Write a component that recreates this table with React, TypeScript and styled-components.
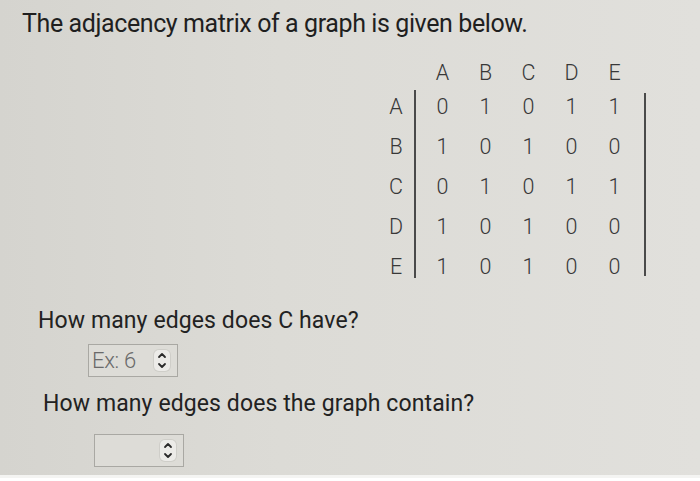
import React from "react";
import styled, { createGlobalStyle } from "styled-components";

const Global = createGlobalStyle`
  html, body { margin: 0; padding: 0; }
  body {
    width: 700px; height: 481px; overflow: hidden;
    font-family: Roboto, "Liberation Sans", sans-serif;
  }
`;

const Page = styled.div`
  width: 700px;
  height: 478px;
  box-sizing: border-box;
  background: linear-gradient(90deg, #d5d4cf 0%, #dcdbd6 40%, #e1e0dc 100%);
  border-bottom: 3px solid #f4f4f2;
  display: flex;
  flex-direction: column;
  align-items: flex-start;
  padding: 8px 0 0 22px;
  color: #262626;
`;

const Title = styled.h1`
  margin: 0;
  font-size: 25px;
  font-weight: 400;
  line-height: 31px;
  letter-spacing: -0.4px;
  color: #1f1f1f;
`;

const Matrix = styled.div`
  margin: 19px 0 0 360px;
  display: grid;
  grid-template-columns: 32px max-content;
  justify-content: start;
  font-size: 21.5px;
  font-weight: 300;
  color: #383838;
`;

const Header = styled.div`
  grid-column: 2;
  display: grid;
  grid-template-columns: repeat(5, 43px);
  padding-left: 7px;
  height: 28px;
  align-items: center;
`;

const Labels = styled.div`
  display: grid;
  grid-auto-rows: 40px;
  align-items: center;
  justify-items: center;
  padding-right: 4px;
`;

const Body = styled.div`
  position: relative;
  display: grid;
  grid-template-columns: repeat(5, 43px);
  grid-auto-rows: 40px;
  align-items: center;
  padding: 0 10px 0 7px;
  &::before, &::after {
    content: "";
    position: absolute;
    top: 4px;
    bottom: 8px;
    width: 2px;
    background: #4a4a4a;
  }
  &::before { left: 0; }
  &::after { right: 0; top: 7px; bottom: 10px; }
`;

const Cell = styled.span`
  text-align: center;
`;

const Question = styled.p<{ $indent: number; $top: number }>`
  margin: ${(p) => p.$top}px 0 0 ${(p) => p.$indent}px;
  font-size: 23px;
  line-height: 28px;
  font-weight: 400;
  letter-spacing: 0.1px;
  color: #222;
`;

const Field = styled.div<{ $indent: number; $top: number }>`
  margin: ${(p) => p.$top}px 0 0 ${(p) => p.$indent}px;
  width: 90px;
  height: 33px;
  box-sizing: border-box;
  border: 1.5px solid #a9a8a3;
  background: #dddcd7;
  display: flex;
  align-items: center;
  justify-content: space-between;
  padding: 0 7px 0 3px;
`;

const Placeholder = styled.span`
  font-size: 22px;
  font-weight: 300;
  letter-spacing: -0.3px;
  color: #6a6a6a;
`;

const Spin = styled.div`
  width: 16px;
  height: 21px;
  border-radius: 5px;
  background: #ecebe8;
  box-shadow: 0 0 0 1px #cfcec9;
  display: flex;
  flex-direction: column;
  align-items: center;
  justify-content: space-around;
`;

const Chevron = ({ down }: { down?: boolean }) => (
  <svg width="10" height="7" viewBox="0 0 10 7">
    <path
      d={down ? "M2 2 L5 5 L8 2" : "M2 5 L5 2 L8 5"}
      fill="none"
      stroke="#2a2a2a"
      strokeWidth="1.8"
      strokeLinecap="round"
      strokeLinejoin="round"
    />
  </svg>
);

const Spinner = () => (
  <Spin>
    <Chevron />
    <Chevron down />
  </Spin>
);

const cols = ["A", "B", "C", "D", "E"];
const data = [
  [0, 1, 0, 1, 1],
  [1, 0, 1, 0, 0],
  [0, 1, 0, 1, 1],
  [1, 0, 1, 0, 0],
  [1, 0, 1, 0, 0],
];

export default function App() {
  return (
    <>
      <Global />
      <Page>
        <Title>The adjacency matrix of a graph is given below.</Title>
        <Matrix>
          <Header>
            {cols.map((c) => (
              <Cell key={c}>{c}</Cell>
            ))}
          </Header>
          <Labels>
            {cols.map((c) => (
              <Cell key={c}>{c}</Cell>
            ))}
          </Labels>
          <Body>
            {data.flatMap((row, r) =>
              row.map((v, i) => <Cell key={`${r}-${i}`}>{v}</Cell>)
            )}
          </Body>
        </Matrix>
        <Question $indent={16} $top={21}>
          How many edges does C have?
        </Question>
        <Field $indent={66} $top={9}>
          <Placeholder>Ex: 6</Placeholder>
          <Spinner />
        </Field>
        <Question $indent={21} $top={13}>
          How many edges does the graph contain?
        </Question>
        <Field $indent={72} $top={16}>
          <span />
          <Spinner />
        </Field>
      </Page>
    </>
  );
}
